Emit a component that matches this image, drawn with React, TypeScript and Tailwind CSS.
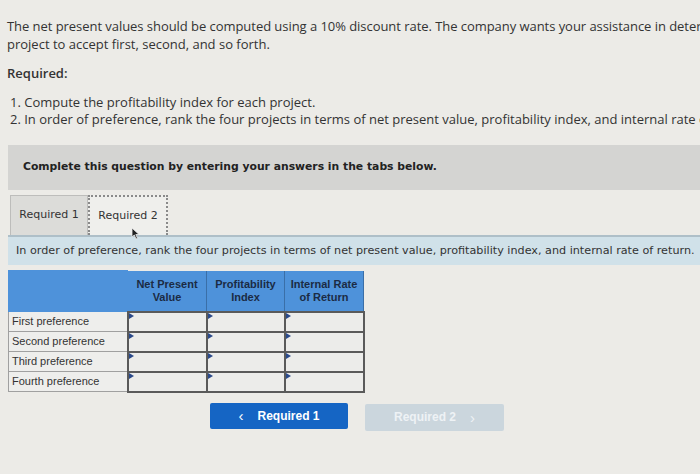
import React from "react";

const rows = ["First preference", "Second preference", "Third preference", "Fourth preference"];

function Cell() {
  return (
    <td className="border-2 border-[#5a5a5a] bg-[#ececea] p-0 relative h-[20px]">
      <span className="absolute left-0 top-0 w-0 h-0 border-t-[3px] border-b-[3px] border-l-[5px] border-t-transparent border-b-transparent border-l-[#2b4a8a]" />
    </td>
  );
}

export default function App() {
  return (
    <div className="w-[700px] h-[474px] bg-[#ecebe7] overflow-hidden relative text-[#333]">
      <div className="pl-[7px] pt-[17px] text-[13px] leading-[18px] whitespace-nowrap overflow-hidden" style={{ fontFamily: '"Open Sans", sans-serif' }}>
        <div className="tracking-[-0.05px]">The net present values should be computed using a 10% discount rate. The company wants your assistance in determ</div>
        <div>project to accept first, second, and so forth.</div>
        <div className="font-semibold mt-[11px]">Required:</div>
        <div className="mt-[12px] pl-[3px] leading-[17px]">
          <div>1. Compute the profitability index for each project.</div>
          <div>2. In order of preference, rank the four projects in terms of net present value, profitability index, and internal rate of re</div>
        </div>
      </div>

      <div className="ml-[8px] mt-[17px] h-[45px] bg-[#d4d4d2] flex items-center pl-[15px] text-[10.8px] font-bold text-[#222]" style={{ fontFamily: '"DejaVu Sans", Verdana, sans-serif' }}>
        Complete this question by entering your answers in the tabs below.
      </div>

      <div className="ml-[10px] mt-[5px] flex h-[40px] text-[11px] text-[#333]" style={{ fontFamily: '"DejaVu Sans", Verdana, sans-serif' }}>
        <div className="w-[78px] bg-[#dcdcd9] border border-[#bdbdbb] border-b-0 flex items-center justify-center">Required 1</div>
        <div className="w-[80px] bg-[#efefec] border-2 border-dotted border-[#8a8a8a] border-b-0 flex items-center justify-center">Required 2</div>
      </div>

      <div className="ml-[8px] h-[30px] bg-[#d0e1e9] border-t-2 border-[#aebfc8] flex items-center pl-[8px] text-[11.2px] text-[#333] whitespace-nowrap" style={{ fontFamily: '"DejaVu Sans", Verdana, sans-serif' }}>
        In order of preference, rank the four projects in terms of net present value, profitability index, and internal rate of return.
      </div>

      <table className="ml-[8px] mt-[5px] border-collapse text-[11px]" style={{ fontFamily: '"Liberation Sans", Arial, sans-serif' }}>
        <thead>
          <tr className="h-[41px] bg-[#4e92da] text-[#1b2b44] font-bold leading-[13px]">
            <th className="w-[119px] border border-[#4e92da]"></th>
            <th className="w-[79px] border-x border-[#3a6fa8] font-bold">Net Present<br />Value</th>
            <th className="w-[78px] border-x border-[#3a6fa8] font-bold">Profitability<br />Index</th>
            <th className="w-[79px] border-x border-[#3a6fa8] font-bold">Internal Rate<br />of Return</th>
          </tr>
        </thead>
        <tbody>
          {rows.map((r) => (
            <tr key={r}>
              <td className="border border-[#a0a0a0] bg-[#eeeeec] pl-[3px] h-[20px] text-[#333]">{r}</td>
              <Cell />
              <Cell />
              <Cell />
            </tr>
          ))}
        </tbody>
      </table>

      <div className="flex mt-[10px] ml-[210px] gap-[17px]" style={{ fontFamily: '"Liberation Sans", Arial, sans-serif' }}>
        <div className="w-[138px] h-[26px] bg-[#1565c4] rounded-[2px] flex items-center justify-center gap-[14px] text-white text-[12px] font-bold">
          <span className="text-[15px] font-normal leading-none">&lsaquo;</span>
          <span>Required 1</span>
        </div>
        <div className="w-[139px] h-[27px] mt-[1px] bg-[#cbd6dd] rounded-[2px] flex items-center justify-center gap-[14px] text-[#eef2f5] text-[12px] font-bold">
          <span>Required 2</span>
          <span className="text-[15px] font-normal leading-none">&rsaquo;</span>
        </div>
      </div>

      <svg className="absolute left-[131px] top-[227px]" width="9" height="13" viewBox="0 0 9 13">
        <path d="M1 1 L1 10 L3.3 8 L5 12 L6.5 11.3 L4.8 7.5 L8 7.5 Z" fill="#222" stroke="#eee" strokeWidth="0.8" />
      </svg>
    </div>
  );
}
